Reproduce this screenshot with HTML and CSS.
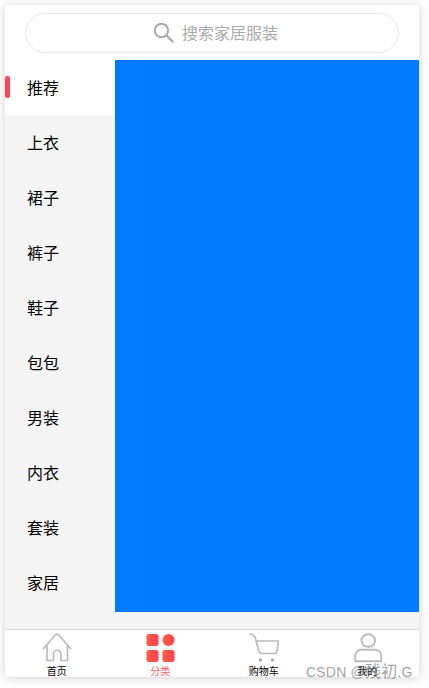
FILE: index.html
```html
<!DOCTYPE html>
<html lang="zh-CN">
<head>
<meta charset="utf-8">
<title>分类</title>
<link rel="stylesheet" href="styles.css">
</head>
<body>
<div class="phone">
  <header class="search-wrap">
    <div class="search">
      <svg class="search-icon" viewBox="0 0 20 20" width="20" height="20"><circle cx="7.500" cy="7.500" r="6.700" fill="none" stroke="#aaa" stroke-width="2"/><path d="M12.500 12.500l6 6" stroke="#aaa" stroke-width="2.400" stroke-linecap="round"/></svg>
      <span>搜索家居服装</span>
    </div>
  </header>
  <main class="content">
    <nav class="side">
      <div class="item active">推荐</div>
      <div class="item">上衣</div>
      <div class="item">裙子</div>
      <div class="item">裤子</div>
      <div class="item">鞋子</div>
      <div class="item">包包</div>
      <div class="item">男装</div>
      <div class="item">内衣</div>
      <div class="item">套装</div>
      <div class="item">家居</div>
    </nav>
    <section class="panel"></section>
  </main>
  <footer class="tabbar">
    <div class="tab">
      <svg class="tab-icon" viewBox="0 0 30 30" width="30" height="30"><path d="M1.500 15.500L13.500 1.800a2 2 0 0 1 3 0L28.500 15.500M5 12.500V27.500h6.500V21a3.700 3.700 0 0 1 7.500 0v6.500H25.500V12.500" fill="none" stroke="#bbb" stroke-width="1.700" stroke-linecap="round" stroke-linejoin="round"/></svg>
      <span>首页</span>
    </div>
    <div class="tab on">
      <svg class="tab-icon" viewBox="0 0 30 30" width="30" height="30"><defs><linearGradient id="g" x1="0" y1="0" x2="1" y2="0"><stop offset="0" stop-color="#ff5d3f"/><stop offset="1" stop-color="#ff3f56"/></linearGradient></defs><rect x="1.500" y="1" width="12" height="12" rx="2.500" fill="url(#g)"/><circle cx="23.500" cy="7" r="6" fill="url(#g)"/><rect x="1.500" y="17" width="12" height="12" rx="2.500" fill="url(#g)"/><rect x="17.500" y="17" width="12" height="12" rx="2.500" fill="url(#g)"/></svg>
      <span>分类</span>
    </div>
    <div class="tab">
      <svg class="tab-icon" viewBox="0 0 30 30" width="30" height="30"><path d="M.8 1c3 0 4.500 1 5.500 4l3.500 13c.4 1.500 1.500 2.500 3 2.500h12.500c1.500 0 2.500-1 2.700-2.500L29.500 8H7" fill="none" stroke="#bbb" stroke-width="1.700" stroke-linecap="round" stroke-linejoin="round"/><circle cx="11.500" cy="27" r="1.700" fill="#aaa"/><circle cx="23.500" cy="27" r="1.700" fill="#aaa"/></svg>
      <span>购物车</span>
    </div>
    <div class="tab">
      <svg class="tab-icon" viewBox="0 0 30 30" width="30" height="30"><ellipse cx="16.250" cy="7.500" rx="6.800" ry="6.300" fill="none" stroke="#bbb" stroke-width="1.900"/><path d="M9.200 16.800h14a6 6 0 0 1 6 6v5.400h-26v-5.400a6 6 0 0 1 6-6z" fill="none" stroke="#bbb" stroke-width="1.900" stroke-linejoin="round"/></svg>
      <span>我的</span>
    </div>
  </footer>
</div>
<div class="watermark">CSDN @<span class="mark-cjk">残初</span>.G</div>
</body>
</html>
```
FILE: styles.css
```css
* { box-sizing: border-box; }
html, body { height: 100%; }
body {
  margin: 0;
  padding: 5px 10px 11px 5px;
  background: #fff;
  overflow: hidden;
  font-family: "Noto Sans CJK SC", "Liberation Sans", sans-serif;
}
.phone {
  width: 414px;
  height: 672px;
  background: #fff;
  display: flex;
  flex-direction: column;
  box-shadow: 0 1px 9px rgba(0, 0, 0, 0.18);
}
.search-wrap {
  height: 55px;
  padding: 8px 20px 7px;
}
.search {
  height: 40px;
  border: 1px solid #e5e5e5;
  border-radius: 20px;
  display: flex;
  align-items: center;
  justify-content: center;
  gap: 8px;
  padding-left: 8px;
  font-size: 16px;
  color: #aaa;
}
.search span { margin-bottom: 2px; }
.search-icon { flex: none; }
.content {
  flex: 1;
  display: flex;
  background: #f5f5f5;
  min-height: 0;
}
.side { width: 110px; flex: none; }
.item {
  height: 55px;
  padding: 0 0 2px 22px;
  display: flex;
  align-items: center;
  font-size: 16px;
  color: #000;
  position: relative;
}
.item.active { background: #fff; }
.item.active::before {
  content: "";
  position: absolute;
  left: 0;
  top: 16px;
  width: 5px;
  height: 22px;
  border-radius: 2px;
  background: #ff4757;
}
.panel {
  flex: 1;
  height: 552px;
  background: #007aff;
}
.tabbar {
  height: 48px;
  flex: none;
  border-top: 1px solid #d6d6d6;
  background: #fff;
  display: flex;
}
.tab {
  flex: 1;
  display: flex;
  flex-direction: column;
  align-items: center;
  padding-top: 3px;
  font-size: 10px;
  line-height: 12px;
  color: #000;
  overflow: hidden;
}
.tab-icon { flex: none; margin-bottom: 2px; }
.tab.on { color: #ff5a5a; }
.watermark {
  position: absolute;
  left: 306px;
  top: 663px;
  font-size: 14px;
  line-height: 18px;
  letter-spacing: 0.2px;
  color: rgba(120, 120, 120, 0.7);
  font-family: "Liberation Sans", "Noto Sans CJK SC", sans-serif;
  white-space: nowrap;
}
.mark-cjk { font-size: 16px; }
```
